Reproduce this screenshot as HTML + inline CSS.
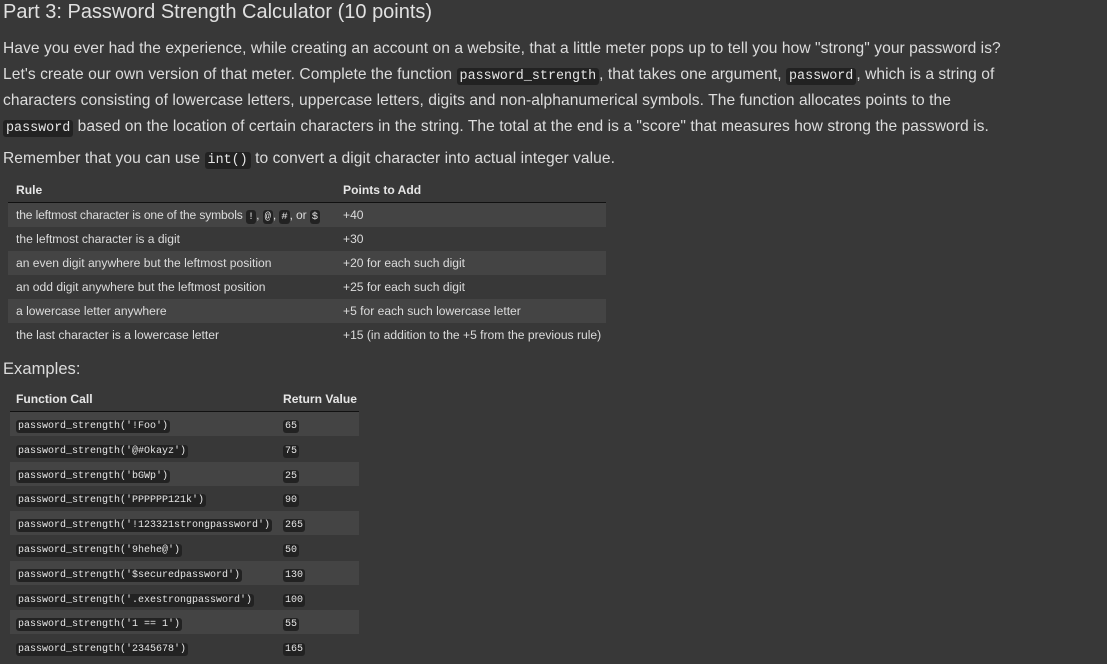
<!DOCTYPE html>
<html><head><meta charset="utf-8"><style>
body{margin:0;background:#383838;color:#dcdcdc;font-family:"Liberation Sans",sans-serif;width:1107px;height:664px;overflow:hidden;position:relative}
h1{position:absolute;left:3px;top:1px;margin:0;font-weight:normal;font-size:20px;color:#e0e0e0}
.p{position:absolute;left:3px;font-size:15.6px;letter-spacing:0.05px;line-height:26px;white-space:nowrap}
code{font-family:"Liberation Mono",monospace;background:#222;color:#e6e6e6;padding:1px 3px;border-radius:3px;font-size:13.4px;letter-spacing:0}
.t{position:absolute;font-size:12.1px}
.row{position:absolute;left:0;height:24px;line-height:24px;width:100%}
.row span{position:absolute;white-space:nowrap}
.s{background:#444}
.h{font-weight:bold;color:#e6e6e6}
.t code{font-size:10px;padding:1px 2px}
.t1 code{font-size:10.5px;padding:1px 2px}
</style></head><body>
<h1>Part 3: Password Strength Calculator (10 points)</h1>
<div class="p" style="top:36px">Have you ever had the experience, while creating an account on a website, that a little meter pops up to tell you how "strong" your password is?</div>
<div class="p" style="top:62px">Let's create our own version of that meter. Complete the function <code>password_strength</code>, that takes one argument, <code>password</code>, which is a string of</div>
<div class="p" style="top:88px">characters consisting of lowercase letters, uppercase letters, digits and non-alphanumerical symbols. The function allocates points to the</div>
<div class="p" style="top:114px"><code>password</code> based on the location of certain characters in the string. The total at the end is a "score" that measures how strong the password is.</div>
<div class="p" style="top:146px">Remember that you can use <code>int()</code> to convert a digit character into actual integer value.</div>

<div class="t t1" style="left:8px;top:178px;width:598px;height:170px">
<div class="row h" style="top:0"><span style="left:8px">Rule</span><span style="left:335px">Points to Add</span></div>
<div style="position:absolute;left:0;top:24px;width:100%;height:1px;background:#111"></div>
<div class="row s" style="top:25px"><span style="left:8px;letter-spacing:-0.15px">the leftmost character is one of the symbols <code>!</code>, <code>@</code>, <code>#</code>, or <code>$</code></span><span style="left:335px">+40</span></div>
<div class="row" style="top:49px"><span style="left:8px">the leftmost character is a digit</span><span style="left:335px">+30</span></div>
<div class="row s" style="top:73px"><span style="left:8px">an even digit anywhere but the leftmost position</span><span style="left:335px">+20 for each such digit</span></div>
<div class="row" style="top:97px"><span style="left:8px">an odd digit anywhere but the leftmost position</span><span style="left:335px">+25 for each such digit</span></div>
<div class="row s" style="top:121px"><span style="left:8px">a lowercase letter anywhere</span><span style="left:335px">+5 for each such lowercase letter</span></div>
<div class="row" style="top:145px"><span style="left:8px">the last character is a lowercase letter</span><span style="left:335px">+15 (in addition to the +5 from the previous rule)</span></div>
</div>

<div class="p" style="top:356px;font-size:16.5px">Examples:</div>

<div class="t" style="left:10px;top:387px;width:349px;height:277px">
<div class="row h" style="top:0"><span style="left:6px">Function Call</span><span style="left:273px">Return Value</span></div>
<div style="position:absolute;left:0;top:24px;width:100%;height:1px;background:#111"></div>
<div class="row s" style="top:25px"><span style="left:6px"><code>password_strength('!Foo')</code></span><span style="left:273px"><code>65</code></span></div>
<div class="row" style="top:50px"><span style="left:6px"><code>password_strength('@#Okayz')</code></span><span style="left:273px"><code>75</code></span></div>
<div class="row s" style="top:75px"><span style="left:6px"><code>password_strength('bGWp')</code></span><span style="left:273px"><code>25</code></span></div>
<div class="row" style="top:99px"><span style="left:6px"><code>password_strength('PPPPPP121k')</code></span><span style="left:273px"><code>90</code></span></div>
<div class="row s" style="top:124px"><span style="left:6px"><code>password_strength('!123321strongpassword')</code></span><span style="left:273px"><code>265</code></span></div>
<div class="row" style="top:149px"><span style="left:6px"><code>password_strength('9hehe@')</code></span><span style="left:273px"><code>50</code></span></div>
<div class="row s" style="top:174px"><span style="left:6px"><code>password_strength('$securedpassword')</code></span><span style="left:273px"><code>130</code></span></div>
<div class="row" style="top:199px"><span style="left:6px"><code>password_strength('.exestrongpassword')</code></span><span style="left:273px"><code>100</code></span></div>
<div class="row s" style="top:223px"><span style="left:6px"><code>password_strength('1 == 1')</code></span><span style="left:273px"><code>55</code></span></div>
<div class="row" style="top:248px"><span style="left:6px"><code>password_strength('2345678')</code></span><span style="left:273px"><code>165</code></span></div>
</div>
</body></html>
